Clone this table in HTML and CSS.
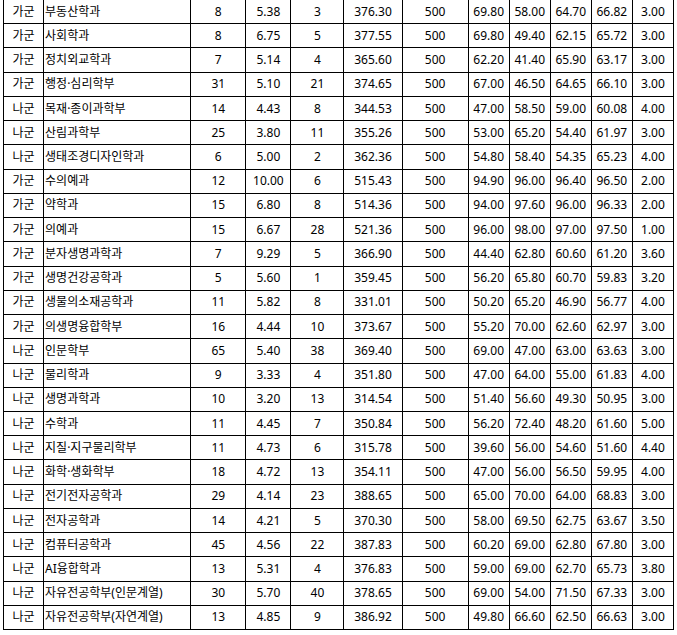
FILE: index.html
```html
<!DOCTYPE html>
<html lang="ko">
<head>
<meta charset="utf-8">
<title>모집단위별 결과</title>
<link rel="stylesheet" href="styles.css">
</head>
<body>
<table class="result">
<colgroup>
<col class="c-group"><col class="c-name"><col class="c-quota"><col class="c-rate"><col class="c-add"><col class="c-score"><col class="c-full"><col class="c-s"><col class="c-s"><col class="c-s"><col class="c-s"><col class="c-s">
</colgroup>
<tbody>
<tr><td>가군</td><td class="name">부동산학과</td><td>8</td><td>5.38</td><td>3</td><td>376.30</td><td>500</td><td>69.80</td><td>58.00</td><td>64.70</td><td>66.82</td><td>3.00</td></tr>
<tr><td>가군</td><td class="name">사회학과</td><td>8</td><td>6.75</td><td>5</td><td>377.55</td><td>500</td><td>69.80</td><td>49.40</td><td>62.15</td><td>65.72</td><td>3.00</td></tr>
<tr><td>가군</td><td class="name">정치외교학과</td><td>7</td><td>5.14</td><td>4</td><td>365.60</td><td>500</td><td>62.20</td><td>41.40</td><td>65.90</td><td>63.17</td><td>3.00</td></tr>
<tr><td>가군</td><td class="name">행정·심리학부</td><td>31</td><td>5.10</td><td>21</td><td>374.65</td><td>500</td><td>67.00</td><td>46.50</td><td>64.65</td><td>66.10</td><td>3.00</td></tr>
<tr><td>나군</td><td class="name">목재·종이과학부</td><td>14</td><td>4.43</td><td>8</td><td>344.53</td><td>500</td><td>47.00</td><td>58.50</td><td>59.00</td><td>60.08</td><td>4.00</td></tr>
<tr><td>나군</td><td class="name">산림과학부</td><td>25</td><td>3.80</td><td>11</td><td>355.26</td><td>500</td><td>53.00</td><td>65.20</td><td>54.40</td><td>61.97</td><td>3.00</td></tr>
<tr><td>나군</td><td class="name">생태조경디자인학과</td><td>6</td><td>5.00</td><td>2</td><td>362.36</td><td>500</td><td>54.80</td><td>58.40</td><td>54.35</td><td>65.23</td><td>4.00</td></tr>
<tr><td>가군</td><td class="name">수의예과</td><td>12</td><td>10.00</td><td>6</td><td>515.43</td><td>500</td><td>94.90</td><td>96.00</td><td>96.40</td><td>96.50</td><td>2.00</td></tr>
<tr><td>가군</td><td class="name">약학과</td><td>15</td><td>6.80</td><td>8</td><td>514.36</td><td>500</td><td>94.00</td><td>97.60</td><td>96.00</td><td>96.33</td><td>2.00</td></tr>
<tr><td>가군</td><td class="name">의예과</td><td>15</td><td>6.67</td><td>28</td><td>521.36</td><td>500</td><td>96.00</td><td>98.00</td><td>97.00</td><td>97.50</td><td>1.00</td></tr>
<tr><td>가군</td><td class="name">분자생명과학과</td><td>7</td><td>9.29</td><td>5</td><td>366.90</td><td>500</td><td>44.40</td><td>62.80</td><td>60.60</td><td>61.20</td><td>3.60</td></tr>
<tr><td>가군</td><td class="name">생명건강공학과</td><td>5</td><td>5.60</td><td>1</td><td>359.45</td><td>500</td><td>56.20</td><td>65.80</td><td>60.70</td><td>59.83</td><td>3.20</td></tr>
<tr><td>가군</td><td class="name">생물의소재공학과</td><td>11</td><td>5.82</td><td>8</td><td>331.01</td><td>500</td><td>50.20</td><td>65.20</td><td>46.90</td><td>56.77</td><td>4.00</td></tr>
<tr><td>가군</td><td class="name">의생명융합학부</td><td>16</td><td>4.44</td><td>10</td><td>373.67</td><td>500</td><td>55.20</td><td>70.00</td><td>62.60</td><td>62.97</td><td>3.00</td></tr>
<tr><td>나군</td><td class="name">인문학부</td><td>65</td><td>5.40</td><td>38</td><td>369.40</td><td>500</td><td>69.00</td><td>47.00</td><td>63.00</td><td>63.63</td><td>3.00</td></tr>
<tr><td>나군</td><td class="name">물리학과</td><td>9</td><td>3.33</td><td>4</td><td>351.80</td><td>500</td><td>47.00</td><td>64.00</td><td>55.00</td><td>61.83</td><td>4.00</td></tr>
<tr><td>나군</td><td class="name">생명과학과</td><td>10</td><td>3.20</td><td>13</td><td>314.54</td><td>500</td><td>51.40</td><td>56.60</td><td>49.30</td><td>50.95</td><td>3.00</td></tr>
<tr><td>나군</td><td class="name">수학과</td><td>11</td><td>4.45</td><td>7</td><td>350.84</td><td>500</td><td>56.20</td><td>72.40</td><td>48.20</td><td>61.60</td><td>5.00</td></tr>
<tr><td>나군</td><td class="name">지질·지구물리학부</td><td>11</td><td>4.73</td><td>6</td><td>315.78</td><td>500</td><td>39.60</td><td>56.00</td><td>54.60</td><td>51.60</td><td>4.40</td></tr>
<tr><td>나군</td><td class="name">화학·생화학부</td><td>18</td><td>4.72</td><td>13</td><td>354.11</td><td>500</td><td>47.00</td><td>56.00</td><td>56.50</td><td>59.95</td><td>4.00</td></tr>
<tr><td>나군</td><td class="name">전기전자공학과</td><td>29</td><td>4.14</td><td>23</td><td>388.65</td><td>500</td><td>65.00</td><td>70.00</td><td>64.00</td><td>68.83</td><td>3.00</td></tr>
<tr><td>나군</td><td class="name">전자공학과</td><td>14</td><td>4.21</td><td>5</td><td>370.30</td><td>500</td><td>58.00</td><td>69.50</td><td>62.75</td><td>63.67</td><td>3.50</td></tr>
<tr><td>나군</td><td class="name">컴퓨터공학과</td><td>45</td><td>4.56</td><td>22</td><td>387.83</td><td>500</td><td>60.20</td><td>69.00</td><td>62.80</td><td>67.80</td><td>3.00</td></tr>
<tr><td>나군</td><td class="name">AI융합학과</td><td>13</td><td>5.31</td><td>4</td><td>376.83</td><td>500</td><td>59.00</td><td>69.00</td><td>62.70</td><td>65.73</td><td>3.80</td></tr>
<tr><td>나군</td><td class="name">자유전공학부(인문계열)</td><td>30</td><td>5.70</td><td>40</td><td>378.65</td><td>500</td><td>69.00</td><td>54.00</td><td>71.50</td><td>67.33</td><td>3.00</td></tr>
<tr><td>나군</td><td class="name">자유전공학부(자연계열)</td><td>13</td><td>4.85</td><td>9</td><td>386.92</td><td>500</td><td>49.80</td><td>66.60</td><td>62.50</td><td>66.63</td><td>3.00</td></tr>
</tbody>
</table>
</body>
</html>
```
FILE: styles.css
```css
html, body {
  margin: 0;
  padding: 0;
  background: #ffffff;
}

body {
  font-family: "Noto Sans", "Noto Sans CJK KR", sans-serif;
  font-size: 12px;
  color: #000000;
}

.result {
  border-collapse: collapse;
  table-layout: fixed;
  width: 671px;
  margin: -1px 0 0 3px;
}

.c-group { width: 40px; }
.c-name { width: 147px; }
.c-quota { width: 55px; }
.c-rate { width: 45px; }
.c-add { width: 53px; }
.c-score { width: 58px; }
.c-full { width: 66px; }
.c-s { width: 41px; }

.result tr {
  height: 24.24px;
}

.result td {
  border: 1px solid #000000;
  padding: 0 1px;
  text-align: center;
  vertical-align: middle;
  white-space: nowrap;
  line-height: 16px;
}

.result td.name {
  text-align: left;
}
```
